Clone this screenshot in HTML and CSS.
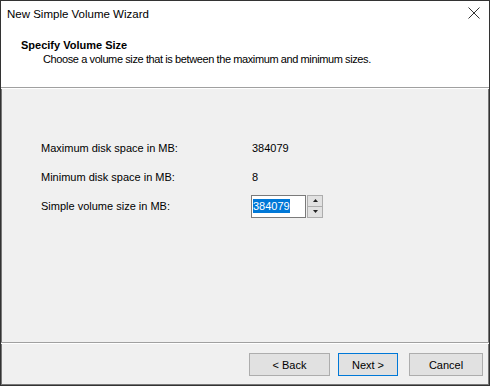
FILE: index.html
```html
<!DOCTYPE html>
<html>
<head>
<meta charset="utf-8">
<link rel="stylesheet" href="styles.css">
</head>
<body>
<div class="window">
  <div class="titlebar">
    <span class="title">New Simple Volume Wizard</span>
    <svg class="close" width="12" height="12" viewBox="0 0 12 12"><path d="M0.5 0.5 L11.5 11.5 M11.5 0.5 L0.5 11.5" stroke="#333" stroke-width="1" fill="none"/></svg>
  </div>
  <div class="header">
    <div class="heading">Specify Volume Size</div>
    <div class="subheading">Choose a volume size that is between the maximum and minimum sizes.</div>
  </div>
  <div class="sep"></div>
  <div class="content">
    <div class="row"><span class="label">Maximum disk space in MB:</span><span class="value">384079</span></div>
    <div class="row"><span class="label">Minimum disk space in MB:</span><span class="value">8</span></div>
    <div class="row row-input"><span class="label">Simple volume size in MB:</span>
      <div class="spinner">
        <div class="field"><span class="sel">384079</span></div>
        <div class="spins">
          <div class="spin"><svg width="5" height="3" viewBox="0 0 5 3"><path d="M2.5 0 L5 3 L0 3 Z" fill="#222"/></svg></div>
          <div class="spin"><svg width="5" height="3" viewBox="0 0 5 3"><path d="M0 0 L5 0 L2.5 3 Z" fill="#222"/></svg></div>
        </div>
      </div>
    </div>
  </div>
  <div class="sep"></div>
  <div class="footer">
    <button class="btn btn-back">&lt; Back</button>
    <button class="btn btn-next">Next &gt;</button>
    <button class="btn btn-cancel">Cancel</button>
  </div>
</div>
</body>
</html>
```
FILE: styles.css
```css
html, body { margin: 0; padding: 0; }
body { font-family: "Liberation Sans", Arial, sans-serif; font-size: 11px; color: #000; }
.window {
  width: 490px; height: 386px; box-sizing: border-box;
  border: 1px solid #333; background: #f0f0f0;
  display: flex; flex-direction: column;
  box-shadow: inset 1px 0 0 #777, inset -1px 0 0 #777, inset 0 -1px 0 #777;
}
.titlebar {
  height: 29px; background: #fff; display: flex; align-items: center;
  justify-content: space-between; padding: 0 9px 0 6px;
}
.title { font-size: 11.5px; position: relative; top: -2px; }
.close { margin-top: -5px; }
.header { background: #fff; height: 57px; box-sizing: border-box; padding: 9px 0 0 20px; }
.heading { font-weight: bold; }
.subheading { padding-left: 22px; margin-top: 2px; letter-spacing: -0.4px; }
.sep { height: 1px; background: #a0a0a0; border-bottom: 1px solid #fff; }
.content { flex: 1; padding: 52px 0 0 40px; }
.row { display: flex; align-items: center; height: 14px; margin-bottom: 15px; }
.label { width: 211px; }
.row-input { margin-top: 2px; }
.spinner { display: flex; height: 23px; margin-left: -1px; }
.field { width: 52px; height: 21px; border: 1px solid #7a7a7a; background: #fff; display: flex; align-items: center; padding-left: 1px; }
.sel { background: #0078d7; color: #fff; line-height: 14px; }
.spins { display: flex; flex-direction: column; width: 16px; margin-left: 1px; }
.spin { flex: 1; background: #e1e1e1; border: 1px solid #adadad; display: flex; align-items: center; justify-content: center; }
.spin + .spin { border-top: none; }
.footer { height: 41px; display: flex; align-items: center; padding: 0 0 0 248px; gap: 8px; }
.btn {
  font-family: inherit; font-size: 11px; height: 23px; background: #e1e1e1;
  border: 1px solid #adadad; padding: 0; color: #000;
}
.btn-back { width: 81px; }
.btn-next { width: 60px; border-color: #0078d7; }
.btn-cancel { width: 74px; margin-left: 3px; }
```
